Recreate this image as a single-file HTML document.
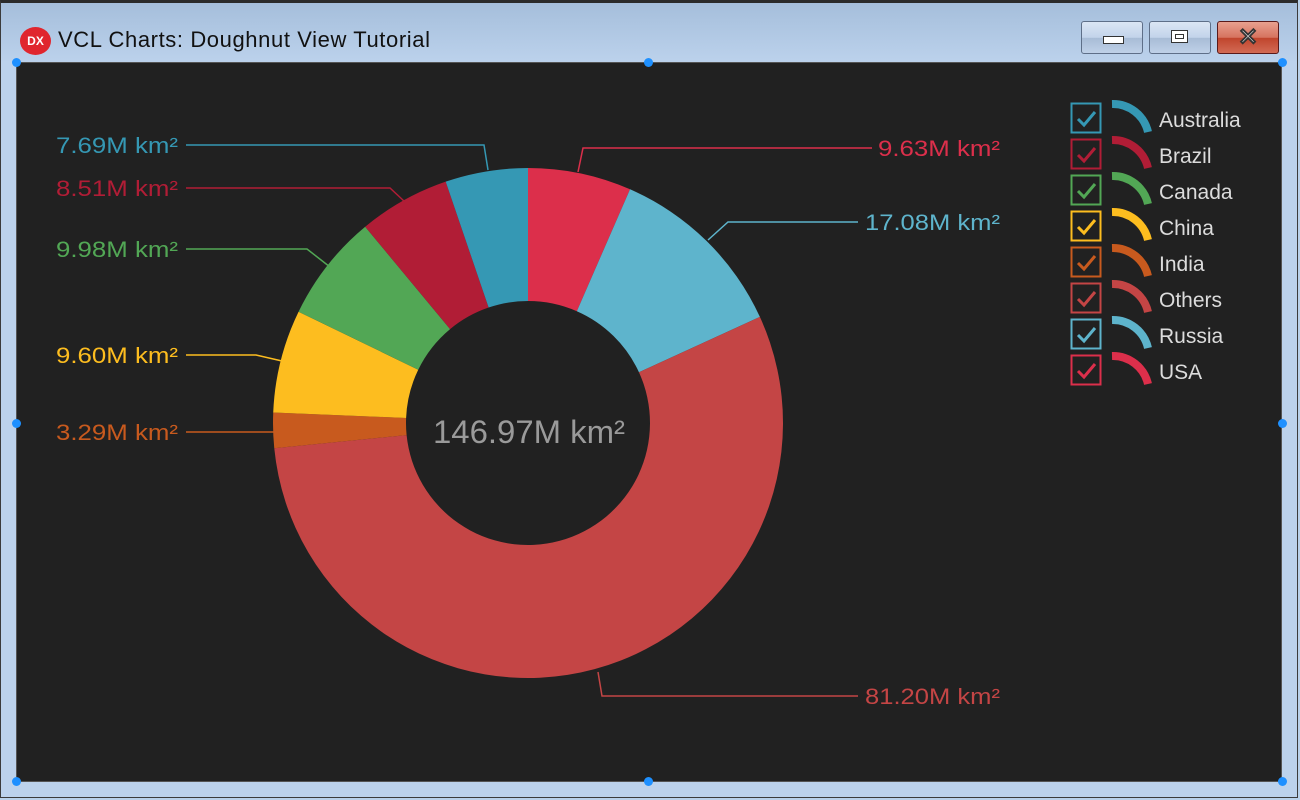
<!DOCTYPE html>
<html><head><meta charset="utf-8"><style>
body{margin:0;width:1300px;height:800px;overflow:hidden;background:#b9d1ea;font-family:"Liberation Sans",sans-serif;position:relative}
.frame{position:absolute;left:0;top:0;width:1298px;height:798px;border:1px solid #3b3b3b;border-top:3px solid #2b2b2b;box-sizing:border-box;background:linear-gradient(#a5bedb 0px,#bcd2ec 60px,#bcd2ec 100%)}
.title{position:absolute;left:58px;top:27px;font-size:22px;letter-spacing:0.6px;color:#111}
.logo{position:absolute;left:20px;top:27px;width:31px;height:28px;border-radius:50%;background:#e0262e;color:#fff;font-size:12px;font-weight:bold;text-align:center;line-height:28px}
.btn{position:absolute;top:21px;width:62px;height:33px;box-sizing:border-box;border:1px solid #5e6f88;border-radius:3px;background:linear-gradient(#dbe6f4,#c2d3ea 50%,#a8bcd6 52%,#bfd1e8)}
.close{background:linear-gradient(#e8a08f,#d6735f 50%,#c0452d 52%,#d26b55);border-color:#5a1a1a}
.client{position:absolute;left:16px;top:62px;width:1266px;height:720px;background:#212121;border:1px solid #555;box-sizing:border-box}
.h{position:absolute;width:9px;height:9px;border-radius:50%;background:#1e90ff}
</style></head><body>
<div class="frame"></div>
<div class="logo">DX</div>
<div class="title">VCL Charts: Doughnut View Tutorial</div>
<div class="btn" style="left:1081px"><div style="position:absolute;left:21px;top:14px;width:19px;height:6px;background:#fff;border:1px solid #333"></div></div>
<div class="btn" style="left:1149px"><div style="position:absolute;left:21px;top:8px;width:17px;height:13px;background:#fff;border:1px solid #333;box-sizing:border-box"></div><div style="position:absolute;left:25px;top:12px;width:9px;height:5px;border:1px solid #333;box-sizing:border-box"></div></div>
<div class="btn close" style="left:1217px"><div style="position:absolute;left:0;width:60px;top:1px;text-align:center;color:#fff;font-size:24px;font-weight:bold;-webkit-text-stroke:1px #333">✕</div></div>
<div class="client"></div>
<svg id="s" style="position:absolute;left:0;top:0" width="1300" height="800" font-family="Liberation Sans, sans-serif" font-size="22"></svg>
<div class="h" style="left:12px;top:58px"></div><div class="h" style="left:644px;top:58px"></div><div class="h" style="left:1278px;top:58px"></div>
<div class="h" style="left:12px;top:419px"></div><div class="h" style="left:1278px;top:419px"></div>
<div class="h" style="left:12px;top:777px"></div><div class="h" style="left:644px;top:777px"></div><div class="h" style="left:1278px;top:777px"></div>
<script>
var s=document.getElementById('s'),h='';
var cx=528,cy=423,R=255,r=122;
var d=[["USA",9.63,"#dc2f4b"],["Russia",17.08,"#5eb4cc"],["Others",81.20,"#c44545"],["India",3.29,"#c85a1e"],["China",9.60,"#fdbd1f"],["Canada",9.98,"#52a755"],["Brazil",8.51,"#b11d36"],["Australia",7.69,"#3598b4"]];
var tot=0;d.forEach(function(x){tot+=x[1]});
var a=0;
function p(rad,ang){return (cx+rad*Math.sin(ang)).toFixed(2)+','+(cy-rad*Math.cos(ang)).toFixed(2)}
d.forEach(function(x){var a1=a+x[1]/tot*2*Math.PI;var L=(a1-a)>Math.PI?1:0;
h+='<path fill="'+x[2]+'" d="M'+p(R,a)+'A'+R+','+R+' 0 '+L+' 1 '+p(R,a1)+'L'+p(r,a1)+'A'+r+','+r+' 0 '+L+' 0 '+p(r,a)+'Z"/>';a=a1;});
var lab=[["9.63M km²","#dc2f4b",878,148,"578,172 583,148 872,148",122],
["17.08M km²","#5eb4cc",865,222,"708,240 728,222 858,222",135],
["81.20M km²","#c44545",865,696,"598,672 602,696 858,696",135],
["7.69M km²","#3598b4",56,145,"488,170 484,145 186,145",122],
["8.51M km²","#b11d36",56,188,"405,202 390,188 186,188",122],
["9.98M km²","#52a755",56,249,"330,267 307,249 186,249",122],
["9.60M km²","#fdbd1f",56,355,"282,361 256,355 186,355",122],
["3.29M km²","#c85a1e",56,432,"275,432 186,432",122]];
lab.forEach(function(l){h+='<polyline fill="none" stroke="'+l[1]+'" stroke-width="1.5" points="'+l[4]+'"/><text x="'+l[2]+'" y="'+(l[3]+8)+'" fill="'+l[1]+'" textLength="'+l[5]+'" lengthAdjust="spacingAndGlyphs">'+l[0]+'</text>';});
h+='<text x="433" y="443" fill="#9a9a9a" font-size="32" textLength="192" lengthAdjust="spacingAndGlyphs">146.97M km²</text>';
var leg=[["Australia","#3598b4"],["Brazil","#b11d36"],["Canada","#52a755"],["China","#fdbd1f"],["India","#c85a1e"],["Others","#c44545"],["Russia","#5eb4cc"],["USA","#dc2f4b"]];
leg.forEach(function(l,i){var y=118+i*36;
h+='<rect x="1071.5" y="'+(y-14.5)+'" width="29" height="29" fill="none" stroke="'+l[1]+'" stroke-width="2"/>';
h+='<polyline points="'+1078+','+(y+1)+' '+1084+','+(y+7)+' '+1095+','+(y-6)+'" fill="none" stroke="'+l[1]+'" stroke-width="3"/>';
h+='<path d="M1112,'+(y-14)+'A36,36 0 0 1 1148,'+(y+14)+'" fill="none" stroke="'+l[1]+'" stroke-width="8"/>';
h+='<text x="1159" y="'+(y+9)+'" fill="#dcdcdc" font-size="21">'+l[0]+'</text>';});
s.innerHTML=h;
</script>
</body></html>
